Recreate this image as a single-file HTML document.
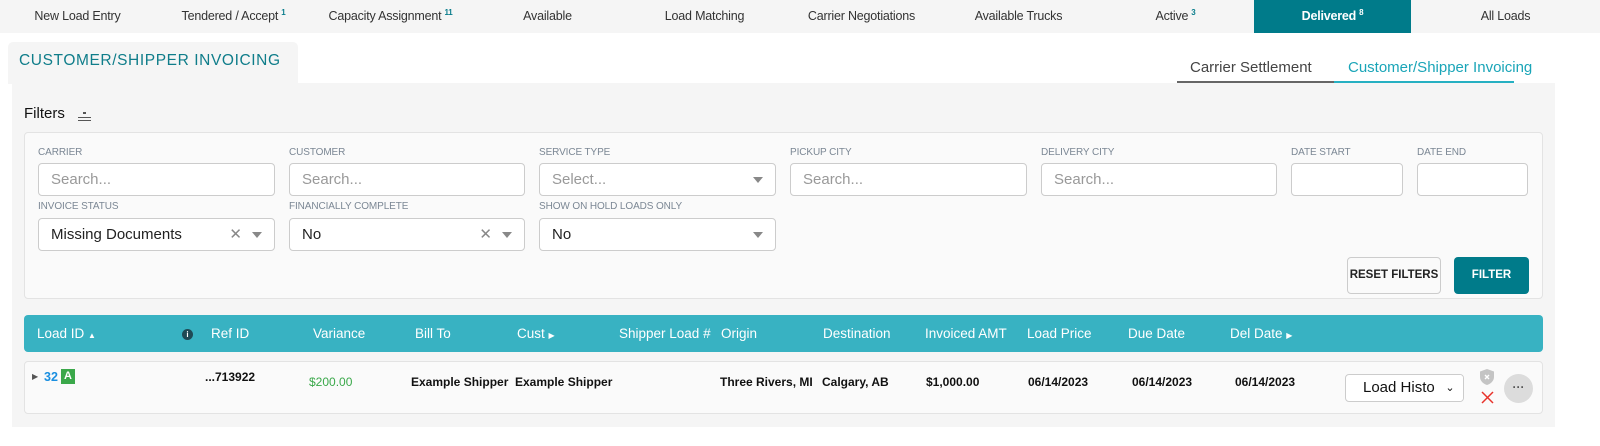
<!DOCTYPE html>
<html><head><style>
*{box-sizing:border-box;margin:0;padding:0}
body{width:1600px;height:446px;background:#fff;font-family:"Liberation Sans",sans-serif;position:relative;overflow:hidden;color:#222}
.a{position:absolute}
.nav{left:0;top:0;width:1600px;height:33px;background:#f5f5f5}
.nt{position:absolute;top:0;height:33px;line-height:33px;font-size:12.5px;color:#333;text-align:center;letter-spacing:-0.2px}
.nt b.s{font-size:8px;color:#0a7d8c;font-weight:bold;margin-left:3px;position:relative;top:-5px;line-height:0}
.lab{position:absolute;font-size:10px;color:#7b8794;letter-spacing:-0.1px}
.in{position:absolute;height:33px;border:1px solid #ccc;border-radius:4px;background:#fff;font-size:15px;line-height:31px;padding-left:12px;color:#999}
.in.v{color:#222}
.car{position:absolute;right:12px;top:13px;border-left:5px solid transparent;border-right:5px solid transparent;border-top:6px solid #888}
.x{position:absolute;right:32px;top:0;color:#888;font-size:15px}
.th{position:absolute;top:0;line-height:37px;color:#fff;font-size:13.5px}
.td{position:absolute;font-size:12px;font-weight:bold;color:#111}
</style></head><body>
<div class="a nav"></div>
<div class="nt" style="left:0;width:155px">New Load Entry</div>
<div class="nt" style="left:155px;width:157px">Tendered / Accept<b class="s">1</b></div>
<div class="nt" style="left:312px;width:157px">Capacity Assignment<b class="s">11</b></div>
<div class="nt" style="left:469px;width:157px">Available</div>
<div class="nt" style="left:626px;width:157px">Load Matching</div>
<div class="nt" style="left:783px;width:157px">Carrier Negotiations</div>
<div class="nt" style="left:940px;width:157px">Available Trucks</div>
<div class="nt" style="left:1097px;width:157px">Active<b class="s">3</b></div>
<div class="nt" style="left:1254px;width:157px;background:#007b8a;color:#fff;font-weight:bold">Delivered<b class="s" style="color:#fff">8</b></div>
<div class="nt" style="left:1411px;width:189px">All Loads</div>

<div class="a" style="left:8px;top:42px;width:290px;height:42px;background:#f5f5f5;border-radius:5px 5px 0 0"></div>
<div class="a" style="left:19px;top:52px;font-size:15.5px;color:#0f7d8a;letter-spacing:0.6px">CUSTOMER/SHIPPER INVOICING</div>
<div class="a" style="left:1190px;top:59px;font-size:15px;color:#444">Carrier Settlement</div>
<div class="a" style="left:1348px;top:59px;font-size:15px;color:#1aa5b8">Customer/Shipper Invoicing</div>
<div class="a" style="left:1177px;top:81px;width:157px;height:2px;background:#666"></div>
<div class="a" style="left:1334px;top:81px;width:180px;height:2px;background:#26b0c2"></div>

<div class="a" style="left:12px;top:83px;width:1543px;height:344px;background:#f5f5f5"></div>
<div class="a" style="left:24px;top:105px;font-size:15px;color:#111">Filters</div>
<div class="a" style="left:78px;top:117px;width:13px;height:1px;background:#555"></div>
<div class="a" style="left:78px;top:120px;width:13px;height:1px;background:#555"></div>
<div class="a" style="left:83px;top:112px;width:3px;height:2px;background:#555"></div>

<div class="a" style="left:24px;top:132px;width:1519px;height:167px;background:#fafafa;border:1px solid #e3e3e3;border-radius:4px"></div>
<div class="lab" style="left:38px;top:147px">CARRIER</div>
<div class="lab" style="left:289px;top:147px">CUSTOMER</div>
<div class="lab" style="left:539px;top:147px">SERVICE TYPE</div>
<div class="lab" style="left:790px;top:147px">PICKUP CITY</div>
<div class="lab" style="left:1041px;top:147px">DELIVERY CITY</div>
<div class="lab" style="left:1291px;top:147px">DATE START</div>
<div class="lab" style="left:1417px;top:147px">DATE END</div>
<div class="in" style="left:38px;top:163px;width:237px">Search...</div>
<div class="in" style="left:289px;top:163px;width:236px">Search...</div>
<div class="in" style="left:539px;top:163px;width:237px">Select...<span class="car"></span></div>
<div class="in" style="left:790px;top:163px;width:237px">Search...</div>
<div class="in" style="left:1041px;top:163px;width:236px">Search...</div>
<div class="in" style="left:1291px;top:163px;width:112px"></div>
<div class="in" style="left:1417px;top:163px;width:111px"></div>
<div class="lab" style="left:38px;top:201px">INVOICE STATUS</div>
<div class="lab" style="left:289px;top:201px">FINANCIALLY COMPLETE</div>
<div class="lab" style="left:539px;top:201px">SHOW ON HOLD LOADS ONLY</div>
<div class="in v" style="left:38px;top:218px;width:237px">Missing Documents<span class="x">✕</span><span class="car"></span></div>
<div class="in v" style="left:289px;top:218px;width:236px">No<span class="x">✕</span><span class="car"></span></div>
<div class="in v" style="left:539px;top:218px;width:237px">No<span class="car"></span></div>
<div class="a" style="left:1347px;top:257px;width:94px;height:37px;border:1px solid #ccc;border-radius:4px;background:#fafafa;font-size:11.5px;font-weight:bold;text-align:center;line-height:35px;color:#222">RESET FILTERS</div>
<div class="a" style="left:1454px;top:257px;width:75px;height:37px;border-radius:4px;background:#007b8a;font-size:11.5px;font-weight:bold;text-align:center;line-height:37px;color:#fff">FILTER</div>

<div class="a" style="left:24px;top:315px;width:1519px;height:37px;background:#38b2c2;border-radius:4px">
<div class="th" style="left:13px">Load ID <span style="font-size:8px">▲</span></div>
<div class="a" style="left:158px;top:14px;width:11px;height:11px;border-radius:50%;background:#1f4a55;color:#fff;font-size:8px;text-align:center;line-height:11px;font-weight:bold">i</div>
<div class="th" style="left:187px">Ref ID</div>
<div class="th" style="left:289px">Variance</div>
<div class="th" style="left:391px">Bill To</div>
<div class="th" style="left:493px">Cust <span style="font-size:8px">▶</span></div>
<div class="th" style="left:595px">Shipper Load #</div>
<div class="th" style="left:697px">Origin</div>
<div class="th" style="left:799px">Destination</div>
<div class="th" style="left:901px">Invoiced AMT</div>
<div class="th" style="left:1003px">Load Price</div>
<div class="th" style="left:1104px">Due Date</div>
<div class="th" style="left:1206px">Del Date <span style="font-size:8px">▶</span></div>
</div>

<div class="a" style="left:24px;top:361px;width:1519px;height:53px;background:#fafafa;border:1px solid #e3e3e3;border-radius:4px"></div>
<div class="a" style="left:32px;top:372px;font-size:8px;color:#555">▶</div>
<div class="a" style="left:44px;top:370px;font-size:12.5px;color:#1a8fe0;font-weight:bold">32</div>
<div class="a" style="left:61px;top:369px;width:14px;height:15px;background:#3aa84a;color:#fff;font-size:11px;font-weight:bold;text-align:center;line-height:15px">A</div>
<div class="td" style="left:205px;top:370px">...713922</div>
<div class="td" style="left:309px;top:375px;color:#3aa84a;font-weight:normal">$200.00</div>
<div class="td" style="left:411px;top:375px">Example Shipper</div>
<div class="td" style="left:515px;top:375px">Example Shipper</div>
<div class="td" style="left:720px;top:375px">Three Rivers, MI</div>
<div class="td" style="left:822px;top:375px">Calgary, AB</div>
<div class="td" style="left:926px;top:375px">$1,000.00</div>
<div class="td" style="left:1028px;top:375px">06/14/2023</div>
<div class="td" style="left:1132px;top:375px">06/14/2023</div>
<div class="td" style="left:1235px;top:375px">06/14/2023</div>
<div class="a" style="left:1345px;top:374px;width:119px;height:28px;border:1px solid #ccc;border-radius:4px;background:#fff;font-size:15px;line-height:26px;padding-left:17px;overflow:hidden;white-space:nowrap;color:#111">Load Histo<span style="position:absolute;right:0;top:0;width:26px;background:#fff;text-align:center;font-size:11px">⌄</span></div>
<svg class="a" style="left:1480px;top:369px" width="14" height="16" viewBox="0 0 14 16"><path d="M7 0L14 2.5V8c0 4-3.5 7-7 8C3.5 15 0 12 0 8V2.5z" fill="#c4c4c4"/><path d="M5 6l4 4M9 6l-4 4" stroke="#fff" stroke-width="1.4"/></svg>
<svg class="a" style="left:1481px;top:391px" width="13" height="13"><path d="M1 1l11 11M12 1L1 12" stroke="#e8322a" stroke-width="1.5"/></svg>
<div class="a" style="left:1504px;top:374px;width:29px;height:29px;border-radius:50%;background:#dcdcdc;color:#555;font-size:12px;text-align:center;line-height:26px;font-weight:bold">···</div>
</body></html>
